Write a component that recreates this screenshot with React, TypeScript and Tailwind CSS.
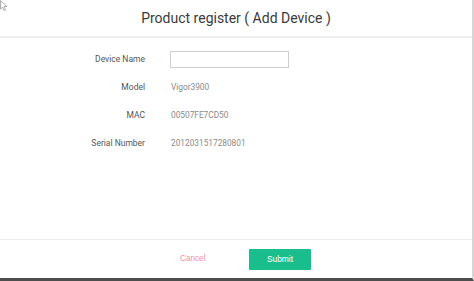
import React from "react";

export default function App() {
  const rows: { label: string; value?: string }[] = [
    { label: "Device Name" },
    { label: "Model", value: "Vigor3900" },
    { label: "MAC", value: "00507FE7CD50" },
    { label: "Serial Number", value: "2012031517280801" },
  ];
  return (
    <div className="relative w-[474px] h-[281px] bg-white overflow-hidden" style={{ fontFamily: "Roboto, 'Liberation Sans', sans-serif" }}>
      <div className="flex flex-col w-[474px] h-[281px] border-r-2 border-[#d6d6d6] border-b-[3px] border-b-[#4d4d4d]">
        <div className="h-[36px] flex items-center justify-center text-[14px] text-[#3a3a3a] pt-[1px]">
          Product register ( Add Device )
        </div>
        <div className="h-[2px] bg-[#efefef]" />
        <div className="flex-1 pt-[7px] flex flex-col">
          {rows.map((r) => (
            <div key={r.label} className="h-[28px] flex items-center">
              <div className="w-[145px] text-right text-[8.5px] text-[#555]">{r.label}</div>
              <div className="ml-[25px] text-[8.3px] text-[#8a8a8a]">
                {r.value === undefined ? (
                  <div className="w-[119px] h-[17px] border border-[#cfcfcf] bg-white" />
                ) : (
                  <span className="pl-[1px]">{r.value}</span>
                )}
              </div>
            </div>
          ))}
        </div>
        <div className="h-[1px] bg-[#ececec]" />
        <div className="h-[38px] flex items-center pl-[180px]">
          <span className="text-[8.2px] text-[#f0909f] w-[69px]" style={{ fontFamily: "'Liberation Sans', Arial, sans-serif" }}>Cancel</span>
          <button className="w-[62px] h-[21px] bg-[#19be8c] text-white text-[8.4px] rounded-[1px]" style={{ fontFamily: "'Liberation Sans', Arial, sans-serif" }}>
            Submit
          </button>
        </div>
      </div>
      <svg className="absolute left-0 top-0" width="9" height="12" viewBox="0 0 9 12">
        <path d="M0.5 0.5 L0.5 9 L2.6 7 L4.2 10.5 L5.6 9.9 L4.1 6.5 L7 6.5 Z" fill="#fff" stroke="#9a9a9a" strokeWidth="0.8" />
      </svg>
    </div>
  );
}
